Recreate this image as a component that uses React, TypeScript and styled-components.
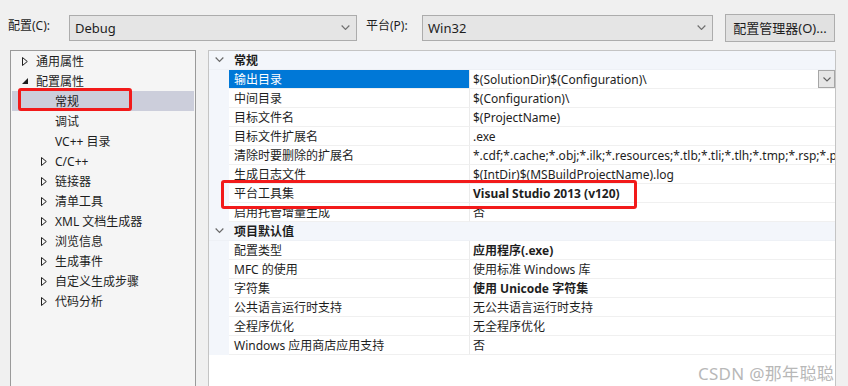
import React from "react";
import styled, { createGlobalStyle } from "styled-components";

const Global = createGlobalStyle`
  html, body { margin: 0; padding: 0; background: #f0f0f0; }
  body {
    width: 848px; height: 386px; overflow: hidden;
    font-family: "Noto Sans", "Noto Sans CJK SC", sans-serif;
    font-size: 12px; color: #1e1e1e;
  }
  * { box-sizing: border-box; }
`;

const Page = styled.div`
  position: relative;
  width: 848px;
  height: 386px;
  overflow: hidden;
  background: #f0f0f0;
`;

const TopBar = styled.div`
  display: flex;
  align-items: center;
  height: 50px;
  padding: 0 0 0 8px;
`;

const Label = styled.span<{ $w: number }>`
  width: ${(p) => p.$w}px;
  white-space: nowrap;
`;

const Combo = styled.div<{ $w: number }>`
  display: flex;
  align-items: center;
  justify-content: space-between;
  width: ${(p) => p.$w}px;
  height: 26px;
  margin-top: 5px;
  padding: 0 6px 0 5px;
  background: #e5e5e5;
  border: 1px solid #acacac;
  font-size: 13px;
`;

const Button = styled.div`
  display: flex;
  align-items: center;
  justify-content: center;
  width: 110px;
  height: 28px;
  margin-left: 12px;
  margin-top: 5px;
  background: #e1e1e1;
  border: 1px solid #adadad;
  font-size: 13px;
`;

const Main = styled.div`
  display: flex;
  gap: 12px;
  padding-left: 10px;
  height: 340px;
`;

const Tree = styled.div`
  width: 186px;
  height: 100%;
  background: #f5f5f5;
  border: 1px solid #9a9a9a;
  border-bottom: none;
  padding: 0 1px;
`;

const TreeRow = styled.div<{ $level: number; $selected?: boolean }>`
  position: relative;
  display: flex;
  align-items: center;
  height: 20px;
  padding-left: ${(p) => (p.$level === 0 ? 10 : 29)}px;
  background: ${(p) => (p.$selected ? "#cccedb" : "transparent")};
  white-space: nowrap;
`;

const Arrow = styled.span`
  display: inline-flex;
  align-items: center;
  justify-content: flex-start;
  width: 14px;
`;

const RedBox = styled.div<{ $l: number; $t: number; $w: number; $h: number }>`
  position: absolute;
  z-index: 2;
  left: ${(p) => p.$l}px;
  top: ${(p) => p.$t}px;
  width: ${(p) => p.$w}px;
  height: ${(p) => p.$h}px;
  border: 3px solid #f21a1a;
  border-radius: 3px;
  pointer-events: none;
`;

const Grid = styled.div`
  flex: 0 0 628px;
  height: 100%;
  background: #ffffff;
  border: 1px solid #c4c4c4;
  border-bottom: none;
  overflow: hidden;
`;

const GridRow = styled.div`
  position: relative;
  display: grid;
  grid-template-columns: 20px 241px 1fr;
  height: 19px;
`;

const Gutter = styled.div`
  display: flex;
  align-items: center;
  justify-content: center;
  background: #f3f6fb;
`;

const CatRow = styled.div`
  display: grid;
  grid-template-columns: 20px 1fr;
  height: 19px;
  background: #f3f6fb;
  border-bottom: 1px solid #eef1f6;
`;

const CatTitle = styled.div`
  display: flex;
  align-items: center;
  padding-left: 5px;
  font-weight: 700;
`;

const NameCell = styled.div<{ $active?: boolean }>`
  display: flex;
  align-items: center;
  padding-left: 5px;
  background: ${(p) => (p.$active ? "#0078d7" : "#ffffff")};
  color: ${(p) => (p.$active ? "#ffffff" : "#1e1e1e")};
  border-right: 1px solid #ebebeb;
  border-bottom: 1px solid #f0f0f0;
  white-space: nowrap;
  overflow: hidden;
`;

const ValueCell = styled.div<{ $bold?: boolean }>`
  position: relative;
  display: flex;
  align-items: center;
  padding-left: 3px;
  font-weight: ${(p) => (p.$bold ? 700 : 400)};
  border-bottom: 1px solid #f0f0f0;
  white-space: nowrap;
  overflow: hidden;
`;

const DropBtn = styled.div`
  position: absolute;
  right: 0;
  top: 0;
  width: 17px;
  height: 18px;
  display: flex;
  align-items: center;
  justify-content: center;
  background: #e6e6e6;
  border: 1px solid #a6a6a6;
`;

const Watermark = styled.div`
  position: absolute;
  right: 14px;
  bottom: 1px;
  font-size: 17px;
  color: #b8b8b8;
  letter-spacing: 0.3px;
`;

const Chevron = ({ w = 8, color = "#707070" }: { w?: number; color?: string }) => (
  <svg width={w} height={w / 2 + 1} viewBox="0 0 8 5">
    <polyline points="0.5,0.5 4,4 7.5,0.5" fill="none" stroke={color} strokeWidth="1.1" />
  </svg>
);

const Collapsed = () => (
  <svg width="6" height="9" viewBox="0 0 6 9">
    <polygon points="0.5,0.5 5.3,4.5 0.5,8.5" fill="none" stroke="#1e1e1e" strokeWidth="1" />
  </svg>
);

const Expanded = () => (
  <svg width="6" height="6" viewBox="0 0 6 6">
    <polygon points="6,0 6,6 0,6" fill="#1e1e1e" />
  </svg>
);

type TreeItem = { text: string; level: number; arrow?: "c" | "e"; selected?: boolean };
const treeItems: TreeItem[] = [
  { text: "通用属性", level: 0, arrow: "c" },
  { text: "配置属性", level: 0, arrow: "e" },
  { text: "常规", level: 1, selected: true },
  { text: "调试", level: 1 },
  { text: "VC++ 目录", level: 1 },
  { text: "C/C++", level: 1, arrow: "c" },
  { text: "链接器", level: 1, arrow: "c" },
  { text: "清单工具", level: 1, arrow: "c" },
  { text: "XML 文档生成器", level: 1, arrow: "c" },
  { text: "浏览信息", level: 1, arrow: "c" },
  { text: "生成事件", level: 1, arrow: "c" },
  { text: "自定义生成步骤", level: 1, arrow: "c" },
  { text: "代码分析", level: 1, arrow: "c" },
];

type Prop = { name: string; value: string; bold?: boolean; active?: boolean; drop?: boolean; mark?: boolean };
const general: Prop[] = [
  { name: "输出目录", value: "$(SolutionDir)$(Configuration)\\", active: true, drop: true },
  { name: "中间目录", value: "$(Configuration)\\" },
  { name: "目标文件名", value: "$(ProjectName)" },
  { name: "目标文件扩展名", value: ".exe" },
  { name: "清除时要删除的扩展名", value: "*.cdf;*.cache;*.obj;*.ilk;*.resources;*.tlb;*.tli;*.tlh;*.tmp;*.rsp;*.pgc;*.pgd;*.meta;*.tlog;*.manifest;*.res" },
  { name: "生成日志文件", value: "$(IntDir)$(MSBuildProjectName).log" },
  { name: "平台工具集", value: "Visual Studio 2013 (v120)", bold: true, mark: true },
  { name: "启用托管增量生成", value: "否" },
];
const defaults: Prop[] = [
  { name: "配置类型", value: "应用程序(.exe)", bold: true },
  { name: "MFC 的使用", value: "使用标准 Windows 库" },
  { name: "字符集", value: "使用 Unicode 字符集", bold: true },
  { name: "公共语言运行时支持", value: "无公共语言运行时支持" },
  { name: "全程序优化", value: "无全程序优化" },
  { name: "Windows 应用商店应用支持", value: "否" },
];

const PropRow = ({ p }: { p: Prop }) => (
  <GridRow>
    <Gutter />
    <NameCell $active={p.active}>{p.name}</NameCell>
    <ValueCell $bold={p.bold}>
      {p.value}
      {p.drop && (
        <DropBtn>
          <Chevron w={8} color="#606060" />
        </DropBtn>
      )}
    </ValueCell>
    {p.mark && <RedBox $l={12} $t={-4} $w={416} $h={29} />}
  </GridRow>
);

const Category = ({ title }: { title: string }) => (
  <CatRow>
    <Gutter>
      <Chevron w={9} color="#6a6a6a" />
    </Gutter>
    <CatTitle>{title}</CatTitle>
  </CatRow>
);

export default function App() {
  return (
    <Page>
      <Global />
      <TopBar>
        <Label $w={61}>配置(C):</Label>
        <Combo $w={288}>
          <span>Debug</span>
          <Chevron w={9} color="#707070" />
        </Combo>
        <Label $w={56} style={{ marginLeft: 9 }}>平台(P):</Label>
        <Combo $w={291}>
          <span>Win32</span>
          <Chevron w={9} color="#707070" />
        </Combo>
        <Button>配置管理器(O)...</Button>
      </TopBar>
      <Main>
        <Tree>
          {treeItems.map((t) => (
            <TreeRow key={t.text} $level={t.level} $selected={t.selected}>
              <Arrow>{t.arrow === "c" ? <Collapsed /> : t.arrow === "e" ? <Expanded /> : null}</Arrow>
              {t.text}
              {t.selected && <RedBox $l={6} $t={-3} $w={114} $h={23} />}
            </TreeRow>
          ))}
        </Tree>
        <Grid>
          <Category title="常规" />
          {general.map((p) => (
            <PropRow key={p.name} p={p} />
          ))}
          <Category title="项目默认值" />
          {defaults.map((p) => (
            <PropRow key={p.name} p={p} />
          ))}
        </Grid>
      </Main>
      <Watermark>CSDN @那年聪聪</Watermark>
    </Page>
  );
}
